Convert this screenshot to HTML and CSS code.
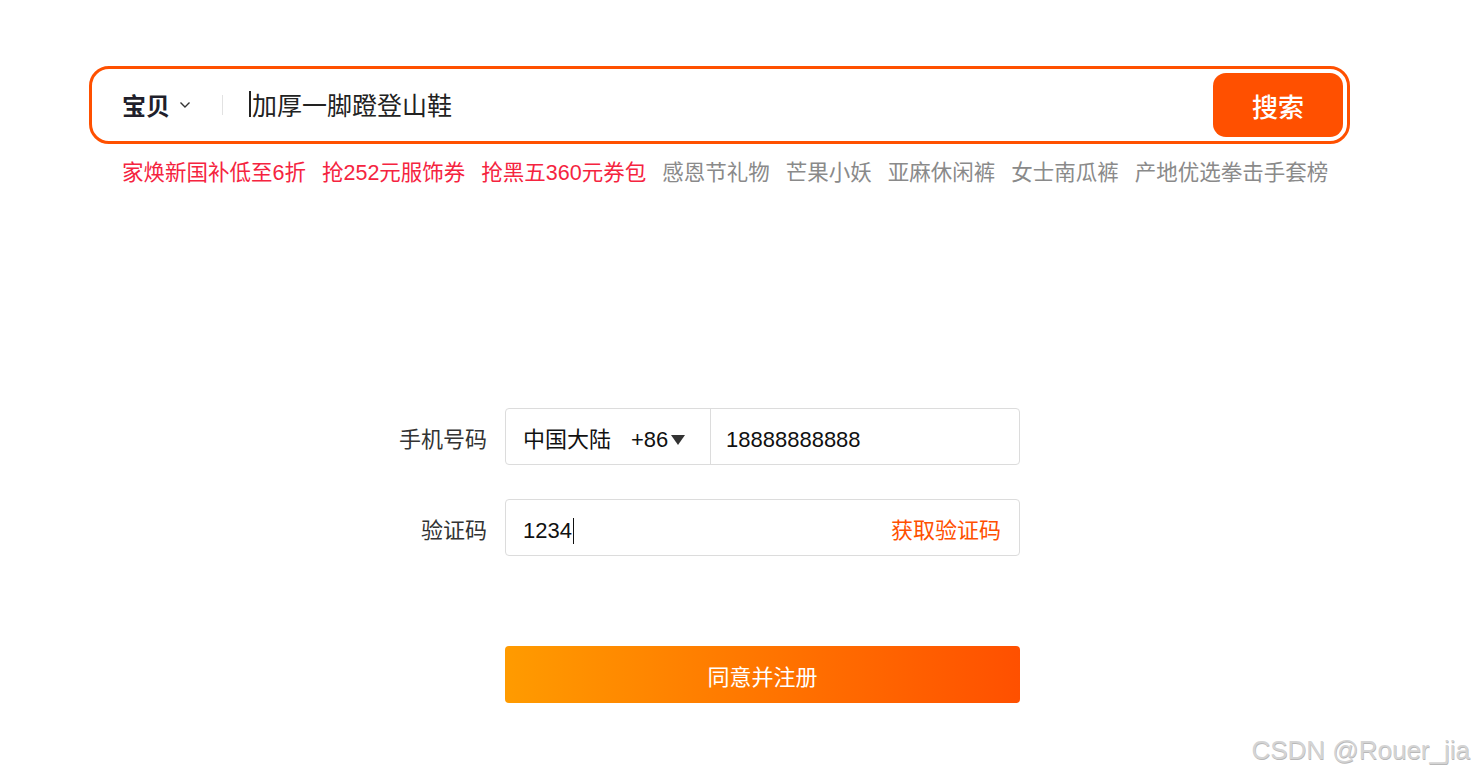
FILE: index.html
```html
<!DOCTYPE html>
<html lang="zh">
<head>
<meta charset="utf-8">
<title>搜索与注册</title>
<link rel="stylesheet" href="styles.css">
</head>
<body>
<div class="page">
  <div class="search">
    <div class="search-box">
      <div class="scope">宝贝
        <svg class="chev" width="12" height="8" viewBox="0 0 12 8"><path d="M1.5 1.5 L6 6 L10.5 1.5" fill="none" stroke="#333" stroke-width="1.4"/></svg>
      </div>
      <span class="sep"></span>
      <div class="query"><span class="caret"></span>加厚一脚蹬登山鞋</div>
      <button class="search-btn">搜索</button>
    </div>
    <div class="hot">
      <span class="hot-item red">家焕新国补低至6折</span>
      <span class="hot-item red">抢252元服饰券</span>
      <span class="hot-item red">抢黑五360元券包</span>
      <span class="hot-item">感恩节礼物</span>
      <span class="hot-item">芒果小妖</span>
      <span class="hot-item">亚麻休闲裤</span>
      <span class="hot-item">女士南瓜裤</span>
      <span class="hot-item">产地优选拳击手套榜</span>
    </div>
  </div>

  <div class="form">
    <div class="row">
      <label class="label">手机号码</label>
      <div class="field">
        <div class="region"><span class="region-text">中国大陆<span class="code">+86</span><span class="tri"></span></span></div>
        <div class="phone">18888888888</div>
      </div>
    </div>
    <div class="row">
      <label class="label">验证码</label>
      <div class="field">
        <div class="code-input">1234<span class="caret2"></span></div>
        <span class="get-code">获取验证码</span>
      </div>
    </div>
    <div class="row submit-row">
      <span class="label"></span>
      <button class="submit">同意并注册</button>
    </div>
  </div>
  <div class="watermark">CSDN @Rouer_jia</div>
</div>
</body>
</html>
```
FILE: styles.css
```css
* { box-sizing: border-box; }
html, body { margin: 0; padding: 0; background: #fff; }
body {
  font-family: "Liberation Sans", "Noto Sans CJK SC", sans-serif;
  width: 1476px;
  height: 778px;
  overflow: hidden;
}
.page { position: relative; width: 1476px; height: 778px; }

.search { padding: 66px 0 0 89px; }
.search-box {
  width: 1261px;
  height: 78px;
  border: 3px solid #ff5000;
  border-radius: 20px;
  display: flex;
  align-items: center;
  padding: 0 4px 0 30px;
}
.scope {
  display: flex;
  align-items: center;
  font-size: 24px;
  font-weight: 700;
  color: #1f1f2b;
  gap: 9px;
  margin-top: -2px;
}
.chev { margin-top: 2px; }
.sep {
  width: 1px;
  height: 20px;
  background: #e2e2e2;
  margin: 0 26px 0 31px;
}
.query {
  flex: 1;
  display: flex;
  align-items: center;
  font-size: 25px;
  color: #222;
  margin-top: -3px;
}
.caret {
  width: 2px;
  height: 26px;
  background: #222;
  margin-right: 1px;
}
.search-btn {
  width: 130px;
  height: 64px;
  border: none;
  border-radius: 13px;
  background: #ff5000;
  color: #fff;
  font-family: "Noto Sans CJK SC", sans-serif;
  font-size: 26px;
  font-weight: 500;
  padding: 0;
}
.hot {
  display: flex;
  gap: 16px;
  margin: 14px 0 0 33px;
  font-size: 21.5px;
  line-height: 30px;
  color: #8a8a8a;
  white-space: nowrap;
}
.hot-item.red { color: #f5243f; }

.form {
  margin: 220px 0 0 389px;
  display: flex;
  flex-direction: column;
  gap: 34px;
}
.row {
  display: flex;
  align-items: center;
  gap: 18px;
}
.label {
  width: 98px;
  text-align: right;
  font-size: 22px;
  color: #333;
}
.field {
  width: 515px;
  height: 57px;
  border: 1px solid #dcdcdc;
  border-radius: 4px;
  display: flex;
  align-items: center;
  font-size: 22px;
  color: #111;
}
.region {
  width: 205px;
  height: 100%;
  border-right: 1px solid #dcdcdc;
  display: flex;
  align-items: center;
  padding-left: 17px;
}
.region-text { white-space: nowrap; }
.code { margin-left: 20px; }
.tri {
  display: inline-block;
  width: 0; height: 0;
  border-left: 7px solid transparent;
  border-right: 7px solid transparent;
  border-top: 10px solid #333;
  margin-left: 3px;
  vertical-align: 2px;
}
.phone { padding-left: 15px; margin-top: 6px; }
.code-input {
  flex: 1;
  padding-left: 17px;
  display: flex;
  align-items: center;
  margin-top: 6px;
}
.caret2 { width: 1.5px; height: 26px; background: #111; margin-left: 1px; }
.get-code { color: #ff5000; margin-right: 18px; }
.submit-row { margin-top: 56px; }
.submit {
  width: 515px;
  height: 57px;
  border: none;
  border-radius: 4px;
  background: linear-gradient(90deg, #ff9b00, #ff5000);
  color: #fff;
  font-family: "Noto Sans CJK SC", sans-serif;
  font-size: 22px;
  padding: 0;
}
.watermark {
  position: absolute;
  right: 6px;
  bottom: 12px;
  font-size: 26px;
  color: #d4d4d4;
  text-shadow: 0.5px 0.5px 0 #b8b8b8;
}
```
